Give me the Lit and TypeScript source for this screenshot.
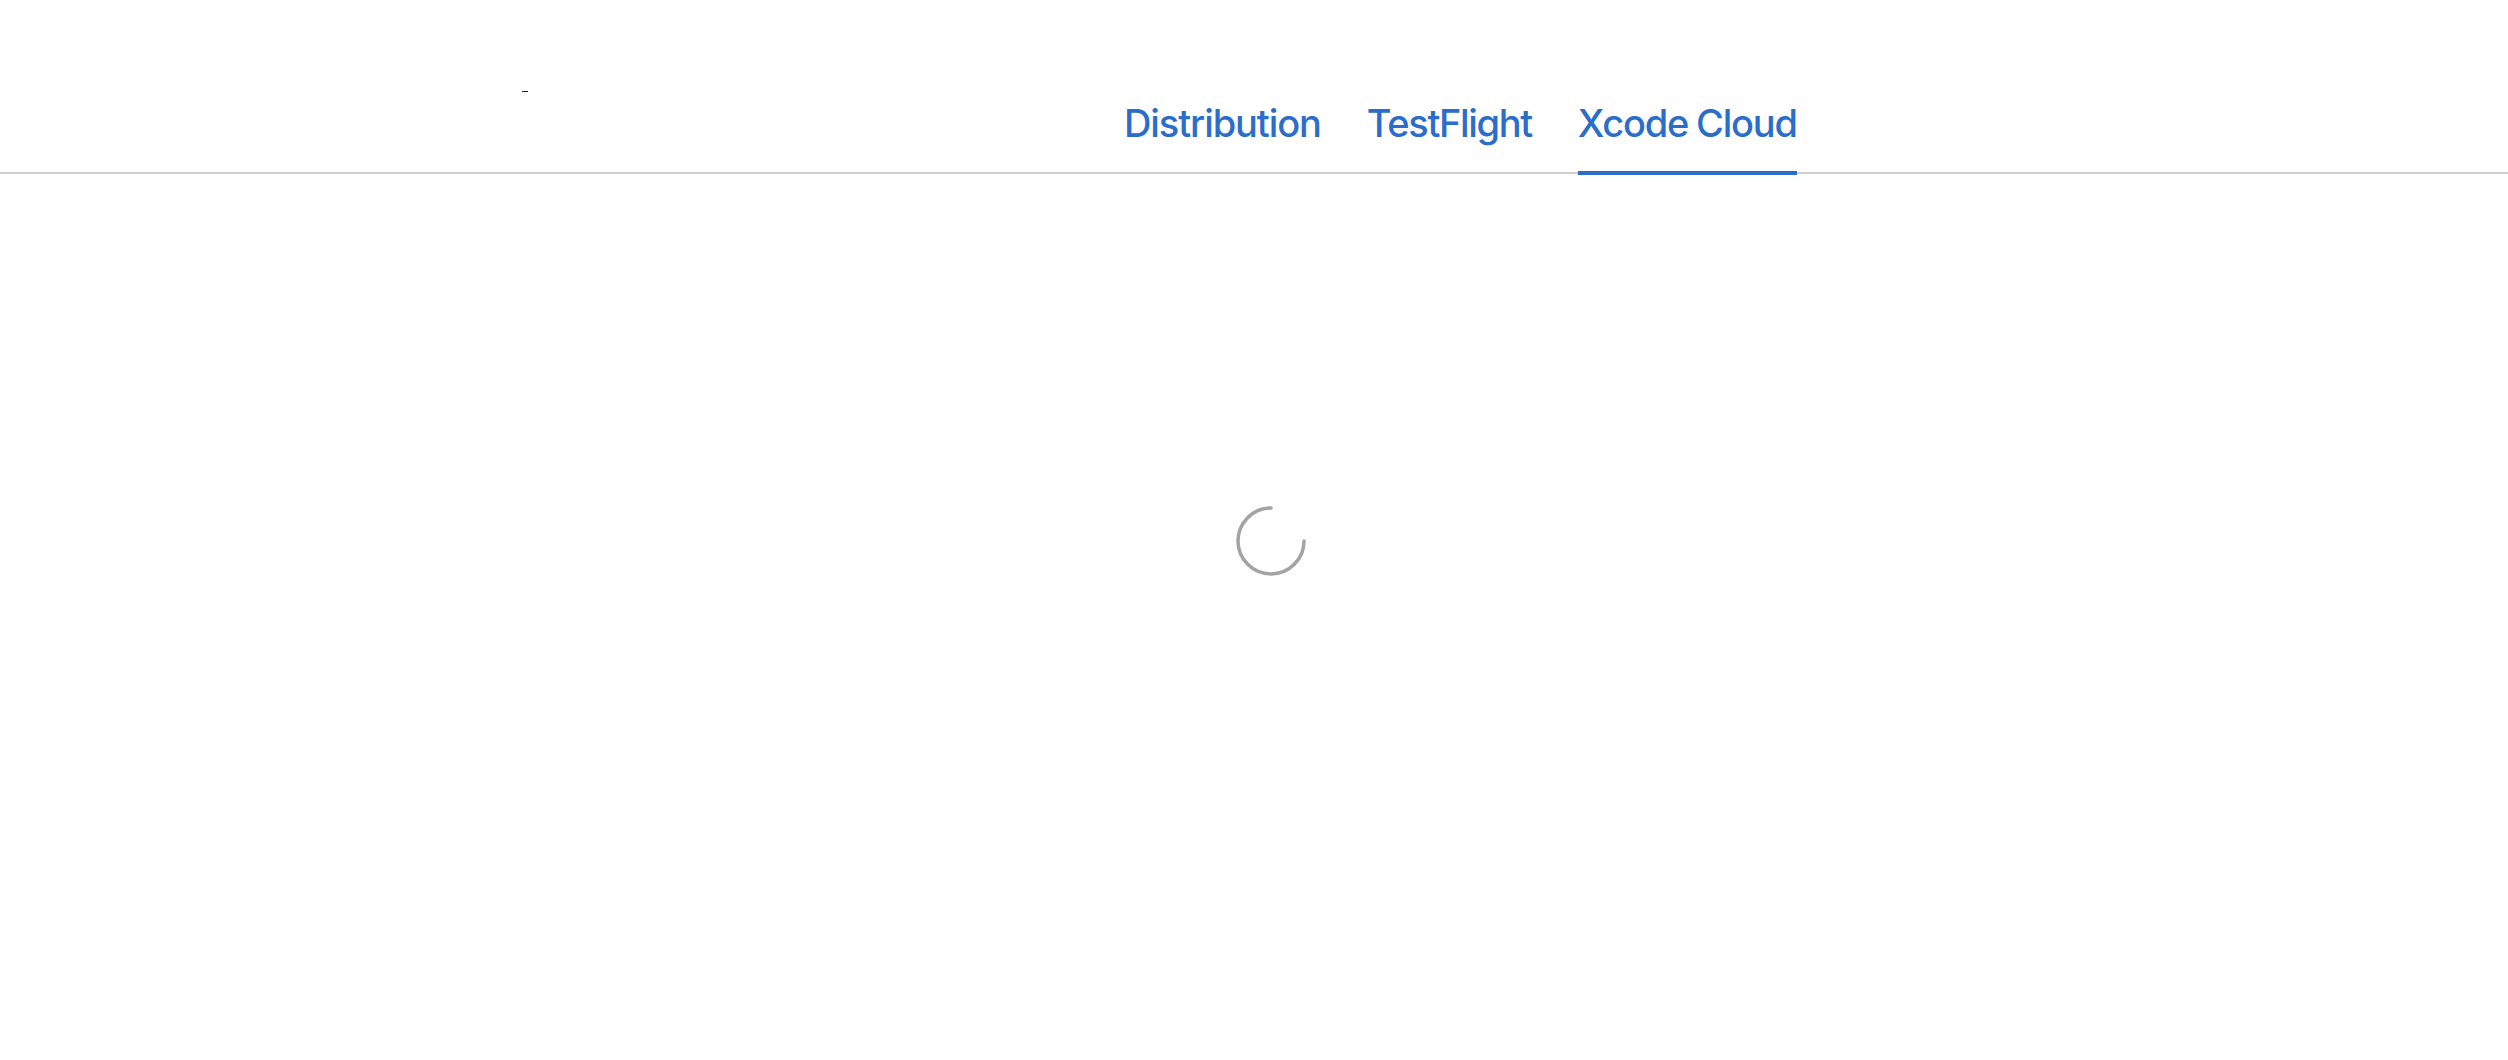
import { LitElement, html, css } from "lit";
import { customElement } from "lit/decorators.js";

@customElement("app-root")
export class AppRoot extends LitElement {
  static styles = css`
    :host { display: block; width: 2508px; height: 1060px; background: #fff; font-family: Inter, "Liberation Sans", sans-serif; overflow: hidden; }
    header { position: relative; height: 172px; border-bottom: 2px solid #cfcfcf; box-sizing: content-box; }
    .dash { position: absolute; left: 522px; top: 91px; width: 6px; height: 1px; background: #222; }
    nav { display: flex; gap: 46px; padding-left: 1124px; height: 175px; }
    nav a { display: block; box-sizing: border-box; height: 175px; padding-top: 98px; font-size: 38px; font-weight: 450; line-height: 50px; letter-spacing: -1.08px; color: #2b6dca; white-space: nowrap; }
    nav a.flight { letter-spacing: -1.35px; }
    nav a.active { border-bottom: 4px solid #2b6dca; word-spacing: -1px; letter-spacing: -1.2px; }
    main { display: flex; justify-content: center; padding-top: 331px; padding-left: 34px; }
    svg { display: block; }
  `;
  render() {
    return html`
      <header>
        <div class="dash"></div>
        <nav>
          <a>Distribution</a>
          <a class="flight">TestFlight</a>
          <a class="active">Xcode Cloud</a>
        </nav>
      </header>
      <main>
        <svg width="72" height="72" viewBox="0 0 72 72" fill="none">
          <path d="M36 3 A33 33 0 1 0 69 36" stroke="#a3a3a3" stroke-width="3.5" stroke-linecap="round"/>
        </svg>
      </main>
    `;
  }
}
